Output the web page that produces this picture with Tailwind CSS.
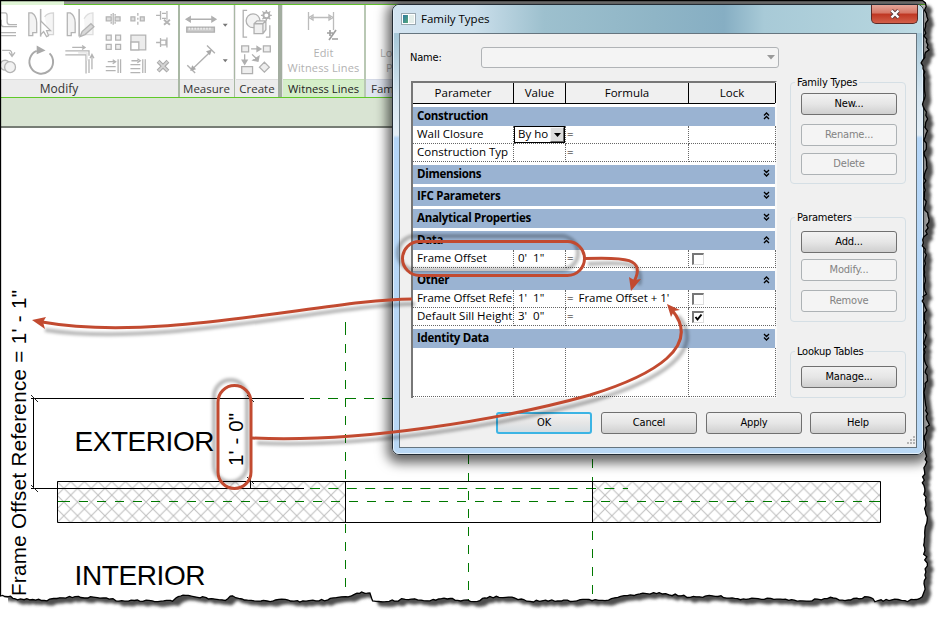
<!DOCTYPE html>
<html lang="en">
<head>
  <meta charset="UTF-8" />
  <meta name="viewport" content="width=device-width, initial-scale=1.0" />
  <title>Family Types</title>
  <script src="https://cdn.jsdelivr.net/npm/@tailwindcss/browser@4"></script>
</head>
<body class="bg-white overflow-hidden">
<div class="relative w-[944px] h-[617px] overflow-hidden font-['Open_Sans',sans-serif]">

  <!-- torn sheet with its drop shadow -->
  <svg class="absolute inset-0" width="944" height="617">
    <defs>
      <filter id="soft" x="-5%" y="-5%" width="110%" height="110%"><feGaussianBlur stdDeviation="1.8" /></filter>
      <filter id="softer" x="-20%" y="-20%" width="140%" height="140%"><feGaussianBlur stdDeviation="1.5" /></filter>
    </defs>
    <path class="torn" transform="translate(6 5)" fill="#555" filter="url(#soft)" />
    <rect x="0" y="603" width="9" height="14" fill="#fff" />
    <path class="torn" fill="#fff" />
  </svg>

  <!-- ribbon -->
  <div class="relative w-[925px] h-[128px] flex flex-col border-t border-black">
    <div class="flex h-[4px] shrink-0">
      <div class="w-16 bg-[#e0f5d6]"></div>
      <div class="flex-1 bg-[#979797] border-b border-[#5fbf2a]"></div>
    </div>
    <div class="flex h-[92px] shrink-0 bg-white text-[11.500px] leading-[17px] text-[#333] text-center">
      <div class="w-[178px] flex flex-col">
        <svg width="178" height="75" viewBox="0 5 178 75" fill="none" stroke="#b4b4b4" stroke-width="1.3">
          <path d="M0 13h4q2 0 2 3v6q0 3 3 3h7M0 20v4q0 3 3 3h13M0 33h15M0 36h15" />
          <path d="M1 51h7q3 0 3 5M8 53l3 4 3-4" /><circle cx="4" cy="66" r="5" fill="#eee" /><circle cx="9" cy="68" r="5.5" fill="#f2f2f2" />
          <path d="M28 13h3q5 3 5 10v10h-4v3h-4z" fill="#f3f3f3" /><path d="M44 17q3-4 9-4v22h-5" stroke="#d5d5d5" fill="#f5f5f5" /><path d="M40 9v28" stroke-width="1.6" />
          <path d="M40 21v14l3-3 3 5 2-1-2-5h4z" fill="#fff" />
          <path d="M67 13h3q5 3 5 10v10h-4v3h-4z" fill="#f3f3f3" /><path d="M84 19q3-6 9-6v22h-8" stroke="#dedede" fill="#f5f5f5" /><path d="M79 9v28" stroke-width="1.6" />
          <path d="M80 37l2-5 9-8 3 3-9 8z" fill="#d8d8d8" />
          <path d="M36 51.500a12 12 0 1 0 13 2.500" stroke-width="2" stroke="#a9a9a9" /><path d="M36 46l9 5-9 4z" fill="#a9a9a9" stroke="none" />
          <path d="M65 51.500h24v5M65 55.500h21v19M89 60v14" /><path d="M78 53.500h9v8" stroke="#e2e2e2" /><path d="M72 48h12M82 46l3 2-3 2M92 70V56M90 59l2-4 2 4" />
          <path d="M106.500 17h5v4h-5zM115.500 17h5v4h-5z" fill="#ddd" /><path d="M113.500 13v12M111.500 14v2M115.500 14v2M111.500 22v2M115.500 22v2" />
          <path d="M131.500 17h4v4h-4zM141 17h4v4h-4z" fill="#ddd" /><path d="M138.500 13v3M138.500 18v2M138.500 22v3" />
          <path d="M106.500 35.500h5v5h-5zM116 35.500h5v5h-5zM106.500 45h5v5h-5zM116 45h5v5h-5z" fill="#eee" />
          <path d="M131.500 35.500h15v15h-15z" fill="#ececec" /><path d="M131.500 42.500h8v8h-8z" fill="#fff" />
          <path d="M106 67.500h10M106 71.500h10M108 62.500h7M113 60.500l3 2-3 2M118.500 60v14M121 60v14" />
          <path d="M131 65.500h10M131 69.500h10M131 73.500h10M132 61.500h7M138 59.500l3 2-3 2M143.500 60v14M146 60v14" />
          <path d="M157 15.500h4M161.500 11v9M163 13.500h4M163 18.500h4M168 11v9" /><path d="M165 20l6 5M171 20l-6 5" stroke-width="2" />
          <path d="M157 43h4M161.500 38.500v9M162 40.500h5v5h-5M168 38v10" />
          <path d="M159 62l10 10M169 62l-10 10" stroke-width="4" stroke="#aaa" /><path d="M159.500 62.500l9 9M168.500 62.500l-9 9" stroke-width="1.800" stroke="#d5d5d5" />
        </svg>
        <div class="bg-[#ececec] border-t border-[#ddd] pr-[60px] text-[12px]"><span>Modify</span></div>
      </div>
      <div class="w-[2px] bg-[#a9b8a4]"></div>
      <div class="w-[53px] flex flex-col">
        <svg width="53" height="75" viewBox="180 5 53 75" fill="none" stroke="#b0b0b0" stroke-width="1.4">
          <path d="M188 19.500h26M190 17l-4 2.500 4 2.500zM212 17l4 2.500-4 2.500z" fill="#a8a8a8" />
          <path d="M186.500 27.500h28v5h-28z" fill="#ccc" /><path d="M189 28v2M192 28v2M195 28v2M198 28v2M201 28v2M204 28v2M207 28v2M210 28v2" stroke="#fff" stroke-width="1" />
          <path d="M192 70l19-18M187 66l8 8M207 46l8 8" /><path d="M190 72l2-6 4 4zM212 50l-6 2 4 4z" fill="#a8a8a8" stroke="none" />
          <path d="M223 24h5l-2.500 3zM223 60h5l-2.500 3z" fill="#777" stroke="none" />
        </svg>
        <div class="bg-[#ececec] border-t border-[#ddd]"><span>Measure</span></div>
      </div>
      <div class="w-[3px] border-x border-[#ececec] bg-[#a9b8a4]"></div>
      <div class="w-[42px] flex flex-col">
        <svg width="42" height="75" viewBox="236 5 42 75" fill="none" stroke="#b0b0b0" stroke-width="1.3">
          <path d="M247 10.500h-4v27h4M266 37.500h4v-12" /><circle cx="253" cy="21" r="7" fill="#f3f3f3" />
          <path d="M254 24l3-3h9v9l-3 4h-9zM254 24h9v10M263 24l3-3" fill="#f0f0f0" />
          <circle cx="266.500" cy="15.500" r="3" stroke-width="2" /><path d="M266.500 10v2M266.500 19v2M261 15.500h2M270 15.500h2M262.500 11.500l2 2M270.500 11.500l-2 2M262.500 19.500l2-2M270.500 19.500l-2-2" />
          <path d="M241.500 46.500h7v6h-7zM263.500 46.500h7v6h-7zM241.500 67.500h11v7h-11zM264.500 63l5 5-5 5-5-5z" fill="#eee" />
          <path d="M251 49.500h9M257 47l4 2.500-4 2.500zM244.500 55v8M242 61l2.500 4 2.500-4zM252 55l6 6M259 57l-1 5-5-1z" fill="#a8a8a8" />
        </svg>
        <div class="bg-[#ececec] border-t border-[#ddd]"><span>Create</span></div>
      </div>
      <div class="w-[5px] border-r border-[#e6e6e6] bg-[#a3ada0]"></div>
      <div class="w-[81px] flex flex-col">
        <div class="h-[75px] flex flex-col items-center text-[#b2b2b2] text-[11px] tracking-[0.15px] leading-[15px]">
          <svg class="shrink-0" width="40" height="40" viewBox="305 5 40 40" fill="none" stroke="#bcbcbc" stroke-width="1.3">
            <path d="M309.500 12v18M334.500 12v18M312 17.500h20M314 15l-4 2.500 4 2.500zM330 15l4 2.500-4 2.500z" /><path d="M328 33h6M331 30v6M337 30l-7 10M333 39h6" stroke="#a0a0a0" stroke-width="1.700" />
          </svg>
          <div>Edit</div>
          <div class="whitespace-nowrap">Witness Lines</div>
        </div>
        <div class="bg-[#d5eec9] border-t border-[#c2e2b3] whitespace-nowrap text-[#222] text-[11.200px]"><span>Witness Lines</span></div>
      </div>
      <div class="w-[2px] bg-[#b9c8b4]"></div>
      <div class="flex-1 flex flex-col text-left whitespace-nowrap">
        <div class="h-[75px] pt-[40px] pl-[14px] leading-[15px] text-[11px] text-[#b2b2b2]"><div>Lo</div><div class="pl-[6px]">P</div></div>
        <div class="bg-[#e0e5f0] border-t border-[#d4d9e6] pl-[5px]">Fam</div>
      </div>
    </div>
    <div class="h-[31px] bg-[#d9e4d3] border-t-[1.500px] border-[#5fc928] border-b-2 border-b-[#777d75]"></div>
  </div>

  <!-- plan view -->
  <svg class="absolute inset-0" width="944" height="617" fill="none" font-family="Liberation Sans, sans-serif">
    <defs>
      <pattern id="hatch" x="57" y="481.500" width="13.700" height="13.700" patternUnits="userSpaceOnUse">
        <path d="M0 0L13.700 13.700M13.700 0L0 13.700" stroke="#bdbdbd" stroke-width="1" />
      </pattern>
    </defs>
    <path d="M57 481h288v41H57zM592 481h289v41H592z" fill="url(#hatch)" />
    <g stroke="#007800" stroke-width="1">
      <path d="M345.500 322v274" stroke-dasharray="9 9" stroke-dashoffset="-4" /><path d="M345.500 322v5" />
      <path d="M468.500 455v146M592.500 459v140" stroke-dasharray="9 9" />
      <path d="M310 398.500h83" stroke-dasharray="10 8" />
      <path d="M310 488.500h318" stroke-dasharray="10 8.400" />
      <path d="M61 501.500h819" stroke-dasharray="9 9" /><path d="M57 501.500h6M869 501.500h11" />
    </g>
    <path d="M57.500 481.500h823v41h-823zM345.500 481v41M592.500 481v41" stroke="#000" />
    <path d="M31 398.500h273M31 488.500h273M33.500 398v90M250.500 398v90" stroke="#000" />
    <path d="M31 395l7 7M31 485l7 7M247 395l7 7M247 477l7 7" stroke="#222" />
    <g fill="#000">
      <text x="74.500" y="451" font-size="28" textLength="140">EXTERIOR</text>
      <text x="74.500" y="584.500" font-size="28" textLength="131">INTERIOR</text>
      <text transform="translate(25.500 596) rotate(-90)" font-size="20.500" textLength="306">Frame Offset Reference = 1' - 1"</text>
      <text transform="translate(243 466) rotate(-90)" font-size="20.500" textLength="53">1' - 0"</text>
    </g>
  </svg>

  <!-- dialog window -->
  <div class="absolute left-[392px] top-[4px] w-[532px] h-[451px] rounded-[7px] border border-[#222b33] bg-[linear-gradient(to_bottom,#a9c9d8_0,#a7c8d8_30px,#d5e5f0_90px,#e4eef6_130px,#b5d6f8_133px,#b9d8f5_100%)] shadow-[0_3px_12px_5px_rgba(0,0,0,0.6)]">
    <div class="w-full h-full rounded-[6px] border border-[#e3f0fa] flex flex-col px-[5px] pb-[5px]">
      <div class="h-[28px] -mx-[5px] -mt-px pl-[7px] shrink-0 flex items-start rounded-t-[6px] bg-[linear-gradient(to_right,#d3e4f1_0,#cbdfeb_80px,#9dc0ce_150px,#8fb5c6_260px,#86aec3_330px,#a8cad7_370px,#b3d3dd_480px,#bfdce5_100%)]">
        <div class="mt-[8px] w-[15px] h-[12px] border border-[#9aa8b0] bg-white p-px flex gap-px">
          <div class="flex-1 bg-linear-to-br from-[#2f78a0] to-[#58a878]"></div>
          <div class="w-[5px] bg-[#e4eeea]"></div>
        </div>
        <div class="ml-[5px] mt-[5px] text-[11.500px] leading-[18px] text-black">Family Types</div>
        <div class="ml-auto mr-[4px] w-[47px] h-[19px] rounded-b-[5px] border border-t-0 border-[#5c2a26] bg-[linear-gradient(to_bottom,#e3a599_0,#d67665_45%,#bf3621_50%,#d2604a_100%)] flex items-center justify-center">
          <svg width="12" height="10" viewBox="0 0 12 10"><path d="M2.500 1.500l7 7M9.500 1.500l-7 7" stroke="#5a3a3c" stroke-width="4" /><path d="M2.500 1.500l7 7M9.500 1.500l-7 7" stroke="#fff" stroke-width="2.400" /></svg>
        </div>
      </div>

      <div class="flex-1 border border-[#66757f] bg-[#f0f0f0] flex flex-col text-[11px] text-black">
        <div class="flex items-center mt-[13px] ml-[10px] shrink-0 h-[21px]">
          <div class="w-[71px] pt-px font-['DejaVu_Sans_Condensed','DejaVu_Sans',sans-serif] font-stretch-condensed tracking-[-0.2px]">Name:</div>
          <div class="w-[298px] h-[21px] rounded-[3px] border border-[#b0b3b6] bg-[#f4f4f4] flex items-center justify-end pr-[3px]">
            <svg width="8" height="5"><path d="M0 0h8l-4 4.500z" fill="#9a9a9a" /></svg>
          </div>
        </div>

        <div class="flex mt-[13px] ml-[11px]">
          <!-- parameter table -->
          <div class="w-[366px] h-[317px] shrink-0 border-l-2 border-t-2 border-[#777] border-r-2 border-r-[#f8f8f8] border-b-[#f8f8f8] bg-white flex flex-col text-[11.500px] leading-[15px]">
            <div class="grid grid-cols-[101px_52px_123px_87px] h-[21px] shrink-0 bg-[#f0f0f0] border-b border-black text-center leading-[19px] *:border-r *:border-black">
              <div>Parameter</div><div>Value</div><div>Formula</div><div>Lock</div>
            </div>

            <div class="mt-[3px] h-[19px] shrink-0 bg-[#9ab3d2] px-1 flex justify-between font-bold tracking-[-0.3px] leading-[18px]"><span>Construction</span><svg class="mt-[5px] mr-[1px]" width="7" height="8"><path d="M1 3.500l2.500-2.500 2.500 2.500M1 7l2.500-2.500 2.500 2.500" fill="none" stroke="#000" stroke-width="1.300" /></svg></div>
            <div class="grid grid-cols-[101px_52px_123px_87px] h-[18px] shrink-0 *:border-r *:border-b *:border-dotted *:border-[#666] *:whitespace-nowrap *:overflow-hidden">
              <div class="pl-1">Wall Closure</div>
              <div><div class="h-[17px] border border-black flex pl-[3px] leading-[14px]">By ho<div class="ml-auto w-[14px] bg-[#ddd] border-l border-t border-[#f4f4f4] border-r border-r-[#666] border-b border-b-[#666] flex items-center justify-center"><svg width="7" height="4"><path d="M0 0h7l-3.500 4z" /></svg></div></div></div>
              <div class="pl-px">=</div><div></div>
            </div>
            <div class="grid grid-cols-[101px_52px_123px_87px] h-[18px] shrink-0 *:border-r *:border-b *:border-dotted *:border-[#666] *:whitespace-nowrap *:overflow-hidden">
              <div class="pl-1">Construction Typ</div><div></div><div class="pl-px">=</div><div></div>
            </div>

            <div class="mt-[3px] h-[19px] shrink-0 bg-[#9ab3d2] px-1 flex justify-between font-bold tracking-[-0.3px] leading-[18px]"><span>Dimensions</span><svg class="mt-[4px] mr-[1px]" width="7" height="8"><path d="M1 1l2.500 2.500 2.500-2.500M1 4.500l2.500 2.500 2.500-2.500" fill="none" stroke="#000" stroke-width="1.300" /></svg></div>
            <div class="mt-[3px] h-[19px] shrink-0 bg-[#9ab3d2] px-1 flex justify-between font-bold tracking-[-0.3px] leading-[18px]"><span>IFC Parameters</span><svg class="mt-[4px] mr-[1px]" width="7" height="8"><path d="M1 1l2.500 2.500 2.500-2.500M1 4.500l2.500 2.500 2.500-2.500" fill="none" stroke="#000" stroke-width="1.300" /></svg></div>
            <div class="mt-[3px] h-[19px] shrink-0 bg-[#9ab3d2] px-1 flex justify-between font-bold tracking-[-0.3px] leading-[18px]"><span>Analytical Properties</span><svg class="mt-[4px] mr-[1px]" width="7" height="8"><path d="M1 1l2.500 2.500 2.500-2.500M1 4.500l2.500 2.500 2.500-2.500" fill="none" stroke="#000" stroke-width="1.300" /></svg></div>

            <div class="mt-[3px] h-[19px] shrink-0 bg-[#9ab3d2] px-1 flex justify-between font-bold tracking-[-0.3px] leading-[18px]"><span>Data</span><svg class="mt-[5px] mr-[1px]" width="7" height="8"><path d="M1 3.500l2.500-2.500 2.500 2.500M1 7l2.500-2.500 2.500 2.500" fill="none" stroke="#000" stroke-width="1.300" /></svg></div>
            <div class="grid grid-cols-[101px_52px_123px_87px] h-[18px] shrink-0 *:border-r *:border-b *:border-dotted *:border-[#666] *:whitespace-nowrap *:overflow-hidden">
              <div class="pl-1">Frame Offset</div><div class="pl-1">0'&nbsp; 1"</div><div class="pl-px">=</div>
              <div class="pl-[3px] pt-[3px]"><div class="size-[12px] border-l-2 border-t-2 border-[#777] border-r border-b border-r-[#ddd] border-b-[#ddd] bg-white"></div></div>
            </div>

            <div class="mt-[3px] h-[19px] shrink-0 bg-[#9ab3d2] px-1 flex justify-between font-bold tracking-[-0.3px] leading-[18px]"><span>Other</span><svg class="mt-[5px] mr-[1px]" width="7" height="8"><path d="M1 3.500l2.500-2.500 2.500 2.500M1 7l2.500-2.500 2.500 2.500" fill="none" stroke="#000" stroke-width="1.300" /></svg></div>
            <div class="grid grid-cols-[101px_52px_123px_87px] h-[18px] shrink-0 *:border-r *:border-b *:border-dotted *:border-[#666] *:whitespace-nowrap *:overflow-hidden">
              <div class="pl-1 tracking-[-0.1px]">Frame Offset Refe</div><div class="pl-1">1'&nbsp; 1"</div><div class="pl-px">=&nbsp;<span class="ml-[2px] tracking-[-0.05px]">Frame Offset + 1'</span></div>
              <div class="pl-[3px] pt-[3px]"><div class="size-[12px] border-l-2 border-t-2 border-[#777] border-r border-b border-r-[#ddd] border-b-[#ddd] bg-white"></div></div>
            </div>
            <div class="grid grid-cols-[101px_52px_123px_87px] h-[18px] shrink-0 *:border-r *:border-b *:border-dotted *:border-[#666] *:whitespace-nowrap *:overflow-hidden">
              <div class="pl-1">Default Sill Height</div><div class="pl-1">3'&nbsp; 0"</div><div class="pl-px">=</div>
              <div class="pl-[3px] pt-[3px]"><div class="size-[12px] border-l-2 border-t-2 border-[#777] border-r border-b border-r-[#ddd] border-b-[#ddd] bg-white"><svg width="9" height="9"><path d="M1.500 4l2 2.500 4-5" fill="none" stroke="#000" stroke-width="2" /></svg></div></div>
            </div>

            <div class="mt-[3px] h-[19px] shrink-0 bg-[#9ab3d2] px-1 flex justify-between font-bold tracking-[-0.3px] leading-[18px]"><span>Identity Data</span><svg class="mt-[4px] mr-[1px]" width="7" height="8"><path d="M1 1l2.500 2.500 2.500-2.500M1 4.500l2.500 2.500 2.500-2.500" fill="none" stroke="#000" stroke-width="1.300" /></svg></div>
            <div class="grid grid-cols-[101px_52px_123px_87px] h-[49px] shrink-0 *:border-r *:border-b *:border-dotted *:border-[#666]">
              <div></div><div></div><div></div><div></div>
            </div>
          </div>

          <!-- side groups -->
          <div class="ml-[13px] w-[116px] shrink-0 flex flex-col font-['DejaVu_Sans_Condensed','DejaVu_Sans',sans-serif] font-stretch-condensed tracking-[-0.2px] text-center">
            <div class="h-[102px] mt-px rounded-[4px] border border-[#d5dfe5] px-[10px]">
              <div class="-mt-[8px] h-[16px] leading-[15px] w-fit -ml-[6px] px-[2px] bg-[#f0f0f0] whitespace-nowrap">Family Types</div>
              <div class="mt-[2px] h-[22px] w-[96px] leading-[20px] rounded-[3px] border border-[#707070] bg-linear-to-b from-[#f2f2f2] via-[#e6e6e6] to-[#cfcfcf]">New...</div>
              <div class="mt-[9px] h-[22px] w-[96px] leading-[20px] rounded-[3px] border border-[#adb2b5] bg-[#f4f4f4] text-[#838383]">Rename...</div>
              <div class="mt-[7px] h-[22px] w-[96px] leading-[20px] rounded-[3px] border border-[#adb2b5] bg-[#f4f4f4] text-[#838383]">Delete</div>
            </div>
            <div class="h-[105px] mt-[33px] rounded-[4px] border border-[#d5dfe5] px-[10px]">
              <div class="-mt-[8px] h-[16px] leading-[15px] w-fit -ml-[6px] px-[2px] bg-[#f0f0f0]">Parameters</div>
              <div class="mt-[5px] h-[22px] w-[96px] leading-[20px] rounded-[3px] border border-[#707070] bg-linear-to-b from-[#f2f2f2] via-[#e6e6e6] to-[#cfcfcf]">Add...</div>
              <div class="mt-[6px] h-[22px] w-[96px] leading-[20px] rounded-[3px] border border-[#adb2b5] bg-[#f4f4f4] text-[#838383]">Modify...</div>
              <div class="mt-[9px] h-[22px] w-[96px] leading-[20px] rounded-[3px] border border-[#adb2b5] bg-[#f4f4f4] text-[#838383]">Remove</div>
            </div>
            <div class="h-[47px] mt-[29px] rounded-[4px] border border-[#d5dfe5] px-[10px]">
              <div class="-mt-[8px] h-[16px] leading-[15px] w-fit -ml-[6px] px-[2px] bg-[#f0f0f0] whitespace-nowrap">Lookup Tables</div>
              <div class="mt-[6px] h-[22px] w-[96px] leading-[20px] rounded-[3px] border border-[#707070] bg-linear-to-b from-[#f2f2f2] via-[#e6e6e6] to-[#cfcfcf]">Manage...</div>
            </div>
          </div>
        </div>

        <div class="flex items-end mt-[14px] ml-[96px] font-['DejaVu_Sans_Condensed','DejaVu_Sans',sans-serif] font-stretch-condensed tracking-[-0.2px] text-center leading-[20px]">
          <div class="h-[22px] w-[96px] leading-[18px] rounded-[3px] border-2 border-[#3cb4e4] bg-linear-to-b from-[#f2f2f2] via-[#e6e6e6] to-[#d4dde2]">OK</div>
          <div class="ml-[9px] h-[22px] w-[96px] rounded-[3px] border border-[#707070] bg-linear-to-b from-[#f2f2f2] via-[#e6e6e6] to-[#cfcfcf]">Cancel</div>
          <div class="ml-[9px] h-[22px] w-[96px] rounded-[3px] border border-[#707070] bg-linear-to-b from-[#f2f2f2] via-[#e6e6e6] to-[#cfcfcf]">Apply</div>
          <div class="ml-[8px] h-[22px] w-[96px] rounded-[3px] border border-[#707070] bg-linear-to-b from-[#f2f2f2] via-[#e6e6e6] to-[#cfcfcf]">Help</div>
          <svg class="-mb-[11px] ml-px" width="9" height="9" fill="#b5b5b5"><path d="M6 0h2v2h-2zM3 3h2v2h-2zM6 3h2v2h-2zM0 6h2v2h-2zM3 6h2v2h-2zM6 6h2v2h-2z" /></svg>
        </div>
      </div>
    </div>
  </div>

  <!-- everything right of the tear is covered again, then the torn outline -->
  <svg class="absolute inset-0" width="944" height="617" fill="none">
    <defs>
      <mask id="outside"><rect width="944" height="617" fill="#fff" /><path class="torn" fill="#000" /></mask>
    </defs>
    <g mask="url(#outside)">
      <rect x="0" y="0" width="944" height="617" fill="#fff" />
      <path class="torn" transform="translate(6 5)" fill="#4d4d4d" filter="url(#soft)" />
      <rect x="0" y="598" width="8" height="19" fill="#fff" />
    </g>
    <path class="torn" stroke="#000" stroke-width="1.300" />
  </svg>

  <!-- red markup -->
  <svg class="absolute inset-0" width="944" height="617" fill="none">
    <g stroke="#000" stroke-opacity="0.280" stroke-width="4" filter="url(#softer)">
      <rect x="214" y="380" width="33" height="102" rx="16.500" />
      <rect x="398" y="236" width="180" height="34" rx="17" />
      <path d="M588 264C625 262 645 261 639 285M415 304C333 304 163 348 45 330M257 443C365 448 505 425 595 400C660 380 708 350 678 316" />
    </g>
    <g stroke="#c24a30" stroke-width="3">
      <rect x="218" y="385.500" width="33" height="103" rx="16.500" />
      <rect x="402.500" y="241.500" width="182" height="34" rx="17" />
      <path d="M585 258.500C625 257 646 258 634 282" />
      <path d="M412 299C330 299 160 343 42 322" />
      <path d="M252 438C360 443 500 420 590 395C655 375 702 346 672 310" />
    </g>
    <g fill="#c24a30">
      <path d="M631 291l-2-14 5 3 7-1z" />
      <path d="M32 320l14-3-3 5 2 7z" />
      <path d="M667 304l13 6-6 1-3 6z" />
    </g>
  </svg>
</div>

<script>
  // sheet outline: along the right edge downwards, then the bottom edge to the left
  const right = [[924,0],[926,3],[925,10],[927,20],[924,30],[926,42],[928,50],[922,60],[924,75],[925,90],[922,107],[926,112],[927,122],[925,140],[926,165],[925,190],[926,210],[928,222],[926,234],[922,240],[925,255],[924,275],[926,294],[921,301],[926,310],[925,335],[925,355],[926,370],[928,378],[924,386],[925,405],[928,425],[924,436],[925,450],[926,465],[923,480],[925,500],[927,517],[924,530],[923,545],[926,560],[926,578],[924,592]];
  const bottom = [[922,597],[908,601],[895,600],[875,601],[868,597],[845,600],[830,598],[815,600],[800,601],[780,599],[755,599],[735,599],[718,596],[690,597],[675,595],[653,593],[640,594],[618,597],[605,600],[580,600],[570,601],[530,601],[515,598],[490,597],[477,601],[458,601],[450,598],[430,600],[402,599],[398,601],[373,601],[370,594],[362,592],[355,595],[342,597],[325,600],[300,602],[285,599],[270,601],[245,600],[230,596],[225,600],[215,600],[200,597],[183,595],[178,597],[173,601],[125,601],[100,598],[75,597],[57,598],[50,600],[15,599],[8,596],[0,596]];
  let seed = 7;
  const jitter = () => (seed = (seed * 16807) % 2147483647) / 2147483647 - 0.5;

  function roughen(points, dx, dy) {
    const out = [];
    for (let i = 0; i < points.length - 1; i++) {
      const [x1, y1] = points[i], [x2, y2] = points[i + 1];
      const steps = Math.max(1, Math.round(Math.hypot(x2 - x1, y2 - y1) / 3));
      for (let s = 0; s < steps; s++) {
        const t = s / steps;
        out.push([x1 + (x2 - x1) * t + jitter() * dx, y1 + (y2 - y1) * t + jitter() * dy]);
      }
    }
    return out;
  }

  const edge = [...roughen(right, 3, 0.5), ...roughen(bottom, 1, 2)];
  const d = 'M0.5 0.5L' + edge.map(p => p[0].toFixed(1) + ' ' + Math.max(0.5, p[1]).toFixed(1)).join('L') + 'L0.5 596Z';
  document.querySelectorAll('.torn').forEach(p => p.setAttribute('d', d));
</script>
</body>
</html>
